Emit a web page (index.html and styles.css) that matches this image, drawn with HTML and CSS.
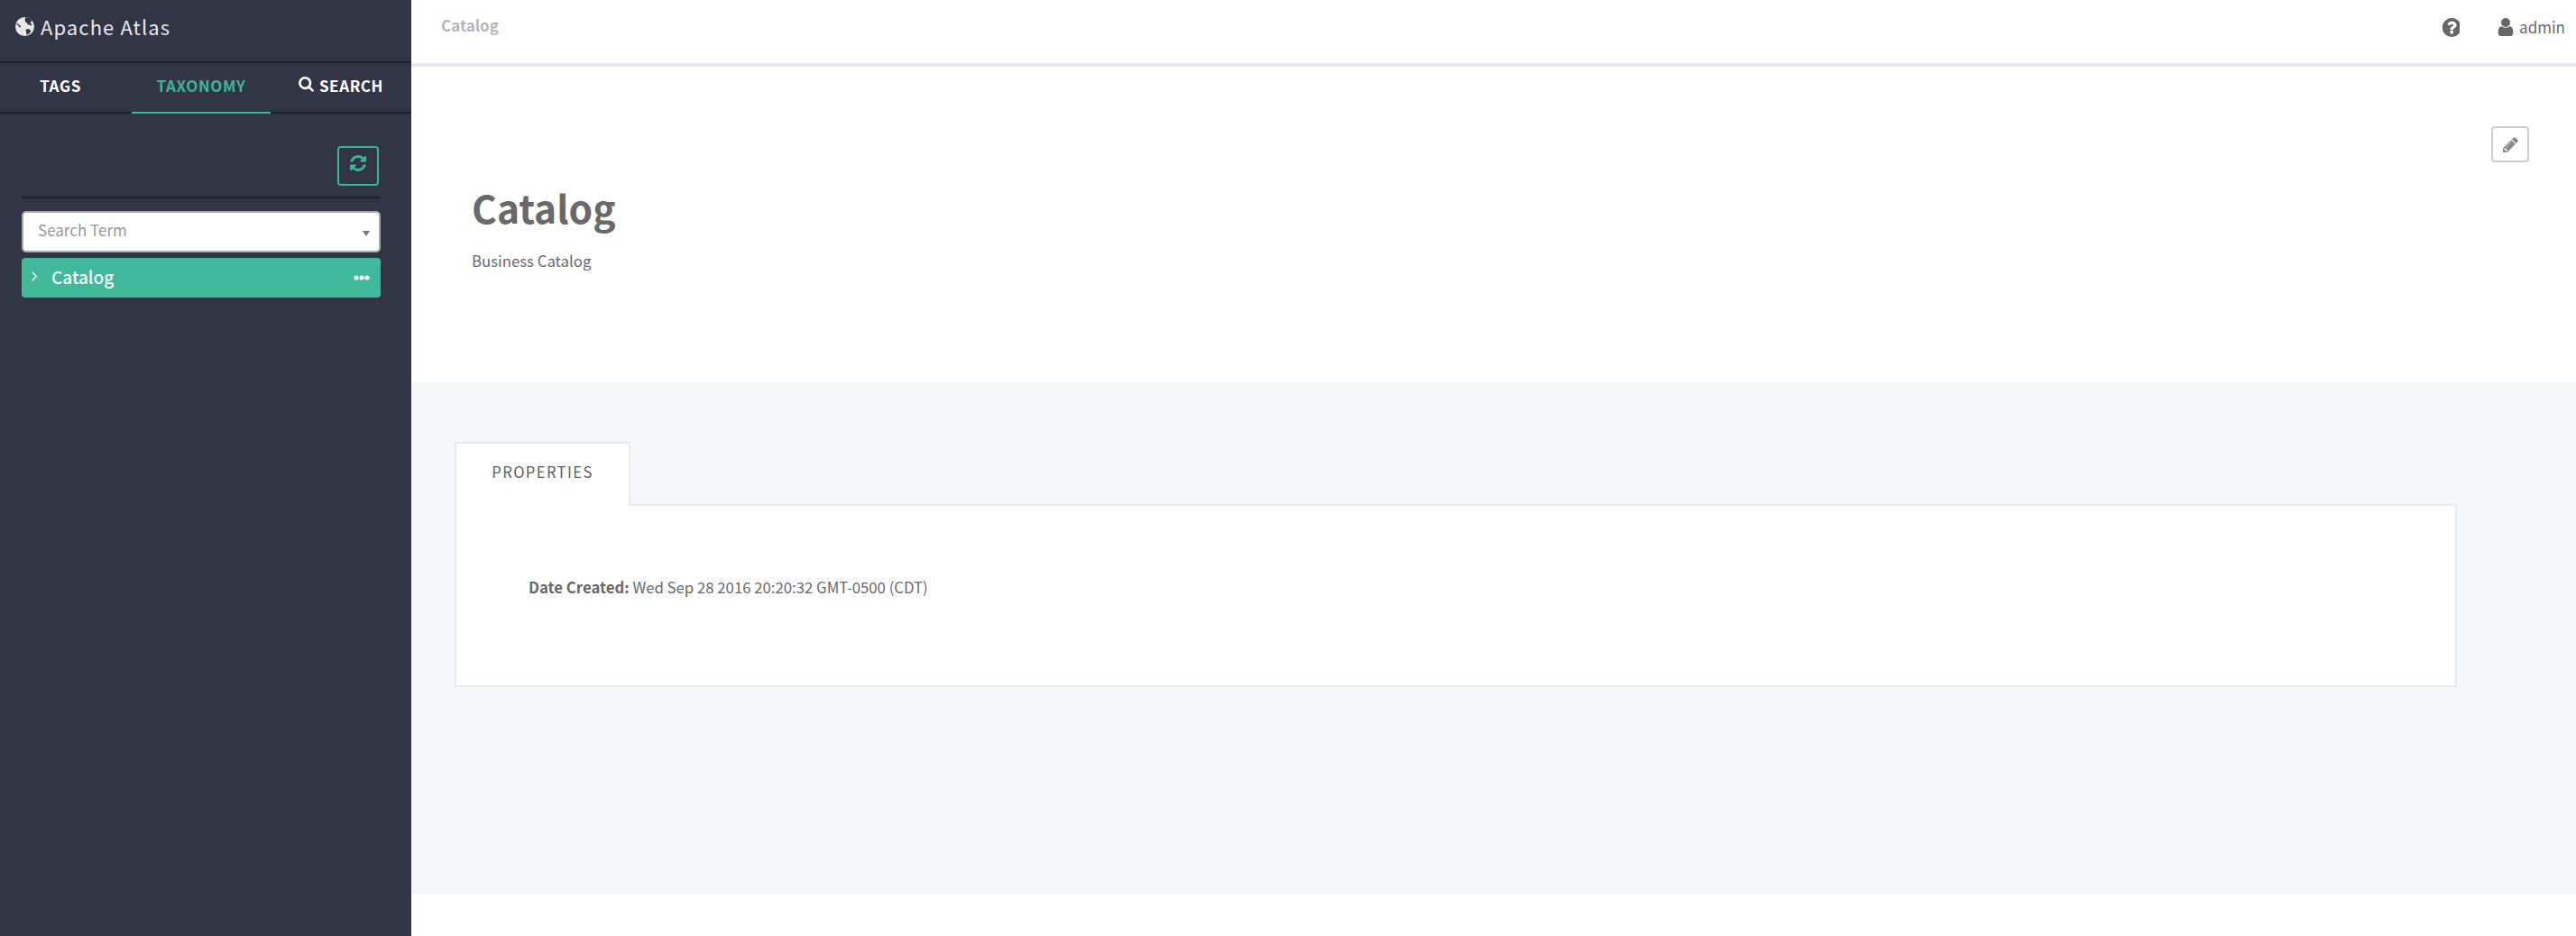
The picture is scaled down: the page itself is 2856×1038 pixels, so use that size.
FILE: index.html
```html
<!DOCTYPE html>
<html lang="en">
<head>
<meta charset="utf-8">
<title>Apache Atlas</title>
<link rel="stylesheet" href="styles.css">
</head>
<body>
<div class="app">
  <aside class="sidebar">
    <div class="brand">
      <svg class="brand-icon" viewBox="0 0 100 100"><circle cx="50" cy="50" r="50" fill="#e8e8e8"/><path fill="#323544" d="M52 3c8-1 20 1 27 6 5 4 8 8 10 12l-7 3-3 7 8 6-2 9-9-5-9-1-6-10-8-4-2-10zM60 62l14 2 9 9-6 9-8 9-9 2-2-13-3-10zM8 30c3 5 7 5 9 9 3 3 8 2 10 7 3 4 1 8-2 9l-4-3-5-8-7-4z"/></svg>
      <span class="brand-name">Apache Atlas</span>
    </div>
    <nav class="side-tabs">
      <a class="side-tab tags">TAGS</a>
      <a class="side-tab active">TAXONOMY</a>
      <a class="side-tab"><svg class="tab-icon" viewBox="0 0 1664 1792"><path fill="currentColor" d="M1152 704q0-185-131.5-316.5t-316.5-131.5-316.5 131.5-131.5 316.5 131.5 316.5 316.5 131.5 316.5-131.5 131.5-316.5zm512 832q0 52-38 90t-90 38q-54 0-90-38l-343-342q-179 124-399 124-143 0-273.5-55.5t-225-150-150-225-55.5-273.5 55.5-273.5 150-225 225-150 273.5-55.5 273.5 55.5 225 150 150 225 55.5 273.5q0 220-124 399l343 343q37 37 37 90z"/></svg>SEARCH</a>
    </nav>
    <div class="side-body">
      <div class="toolbar">
        <button class="refresh"><svg class="refresh-icon" viewBox="128 128 1536 1536"><path fill="currentColor" d="M1639 1056q0 5-1 7-64 268-268 434.5t-478 166.5q-146 0-282.5-55t-243.5-157l-129 129q-19 19-45 19t-45-19-19-45v-448q0-26 19-45t45-19h448q26 0 45 19t19 45-19 45l-137 137q71 66 161 102t187 36q134 0 250-65t186-179q11-17 53-117 8-23 30-23h192q13 0 22.5 9.5t9.5 22.5zm25-800v448q0 26-19 45t-45 19h-448q-26 0-45-19t-19-45 19-45l138-138q-148-137-349-137-134 0-250 65t-186 179q-11 17-53 117-8 23-30 23h-199q-13 0-22.5-9.5t-9.5-22.5v-7q65-268 270-434.5t480-166.5q146 0 284 55.5t245 156.5l130-129q19-19 45-19t45 19 19 45z"/></svg></button>
      </div>
      <div class="select">
        <span class="placeholder">Search Term</span>
        <span class="caret"></span>
      </div>
      <div class="tree-row">
        <svg class="chevron" viewBox="0 0 10 16"><path fill="none" stroke="currentColor" stroke-width="1.6" d="M2 2l6 6-6 6"/></svg>
        <span class="tree-label">Catalog</span>
        <svg class="dots" viewBox="0 0 18 6"><circle cx="3" cy="3" r="2.6" fill="currentColor"/><circle cx="9" cy="3" r="2.6" fill="currentColor"/><circle cx="15" cy="3" r="2.6" fill="currentColor"/></svg>
      </div>
    </div>
  </aside>
  <main class="main">
    <header class="topbar">
      <span class="crumb">Catalog</span>
      <div class="top-actions">
        <svg class="help" viewBox="0 0 1536 1536"><path fill="currentColor" transform="translate(0 -128)" d="M1024 1376v-192q0-14-9-23t-23-9h-192q-14 0-23 9t-9 23v192q0 14 9 23t23 9h192q14 0 23-9t9-23zm256-672q0-88-55.5-163t-138.5-116-170-41q-243 0-371 213-15 24 8 42l132 100q7 6 19 6 16 0 25-12 53-68 86-92 34-24 86-24 48 0 85.5 26t37.5 59q0 38-20 61t-68 45q-63 28-115.5 86.5t-52.5 125.5v36q0 14 9 23t23 9h192q14 0 23-9t9-23q0-19 21.5-49.5t54.5-49.5q32-18 49-28.5t46-35 44.5-48 28-60.5 12.5-81zm384 192q0 209-103 385.5t-279.5 279.5-385.5 103-385.5-103-279.5-279.5-103-385.5 103-385.5 279.5-279.5 385.5-103 385.5 103 279.5 279.5 103 385.5z"/></svg>
        <span class="user">
          <svg class="user-icon" viewBox="256 128 1280 1536"><path fill="currentColor" d="M1536 1399q0 109-62.5 187t-150.5 78h-854q-88 0-150.5-78t-62.5-187q0-85 8.5-160.5t31.5-152 58.5-131 94-89 134.5-34.5q131 128 313 128t313-128q76 0 134.5 34.5t94 89 58.5 131 31.5 152 8.5 160.5zm-256-887q0 159-112.5 271.5t-271.5 112.5-271.5-112.5-112.5-271.5 112.5-271.5 271.5-112.5 271.5 112.5 112.5 271.5z"/></svg>
          admin
        </span>
      </div>
    </header>
    <section class="hero">
      <div class="hero-actions">
        <button class="edit"><svg class="edit-icon" viewBox="128 128 1536 1536"><path fill="currentColor" d="M491 1536l91-91-235-235-91 91v107h128v128h107zm523-928q0-22-22-22-10 0-17 7l-542 542q-7 7-7 17 0 22 22 22 10 0 17-7l542-542q7-7 7-17zm-54-192l416 416-832 832h-416v-416zm683 96q0 53-37 90l-166 166-416-416 166-165q36-38 90-38 53 0 91 38l235 234q37 39 37 91z"/></svg></button>
      </div>
      <h1 class="title">Catalog</h1>
      <p class="subtitle">Business Catalog</p>
    </section>
    <section class="details">
      <div class="tab-strip"><span class="tab">PROPERTIES</span></div>
      <div class="tab-panel">
        <p class="prop"><strong>Date Created:</strong> Wed Sep 28 2016 20:20:32 GMT-0500 (CDT)</p>
      </div>
    </section>
  </main>
</div>
</body>
</html>
```
FILE: styles.css
```css
* { box-sizing: border-box; }
html, body { margin: 0; height: 100%; }
body {
  font-family: "Noto Sans CJK SC", "Noto Sans", sans-serif;
  color: #686868;
  background: #fff;
  overflow: hidden;
}
.app { display: flex; height: 1038px; }

.sidebar { width: 456px; flex: none; background: #323544; color: #fff; }
.brand {
  height: 70px;
  border-bottom: 2px solid #1f2028;
  display: flex;
  align-items: center;
  gap: 7px;
  padding: 0 0 10px 17px;
}
.brand-icon { width: 21px; height: 21px; }
.brand-name { font-size: 22px; line-height: 30px; letter-spacing: 1.1px; color: #e9e9ec; }

.side-tabs {
  height: 56px;
  display: grid;
  grid-template-columns: 146px 154px 156px;
  border-bottom: 2px solid #1f2028;
}
.side-tab {
  display: flex;
  align-items: center;
  justify-content: center;
  height: 56px;
  font-size: 17px;
  font-weight: 700;
  letter-spacing: 0.6px;
  color: #fff;
  padding-bottom: 6px;
  border-bottom: 2px solid transparent;
}
.side-tab.tags { padding-right: 12px; }
.side-tab.active { color: #38b795; border-bottom-color: #38b795; }
.tab-icon { width: 17px; height: 18px; margin-right: 6px; }

.side-body { padding: 36px 34px 0 24px; }
.toolbar {
  display: flex;
  justify-content: flex-end;
  width: 398px;
  padding-right: 2px;
  border-bottom: 2px solid #1f2028;
  height: 58px;
}
.refresh {
  width: 46px;
  height: 44px;
  padding: 0;
  background: transparent;
  border: 2px solid #38b795;
  border-radius: 4px;
  color: #38b795;
  display: flex;
  align-items: flex-start;
  justify-content: center;
}
.refresh-icon { width: 18px; height: 18px; margin-top: 8px; }

.select {
  width: 398px;
  height: 46px;
  margin-top: 14px;
  background: #fff;
  border: 2px solid #aaa;
  border-radius: 5px;
  display: flex;
  align-items: center;
  justify-content: space-between;
  padding: 0 10px 0 16px;
}
.placeholder { font-size: 17px; line-height: 24px; color: #999; margin-bottom: 4px; }
.caret {
  width: 0;
  height: 0;
  margin-top: 4px;
  border-left: 4px solid transparent;
  border-right: 4px solid transparent;
  border-top: 6px solid #777;
}
.tree-row {
  width: 398px;
  height: 44px;
  margin-top: 6px;
  background: #40b99a;
  border-radius: 4px;
  color: #fff;
  display: flex;
  align-items: center;
  padding: 0 12px 0 10px;
}
.chevron { width: 8px; height: 13px; margin-bottom: 4px; }
.tree-label { flex: 1; margin-left: 15px; font-size: 19px; line-height: 30px; font-weight: 500; margin-bottom: 2px; }
.dots { width: 18px; height: 6px; }

.main { flex: 1; min-width: 0; }
.topbar {
  height: 74px;
  border-bottom: 4px solid #e8e9f0;
  display: flex;
  align-items: center;
  justify-content: space-between;
  padding: 0 12px 10px 33px;
}
.crumb { font-size: 17px; line-height: 26px; font-weight: 600; color: #b2b4ba; margin-bottom: 4px; }
.top-actions { display: flex; align-items: center; gap: 42px; }
.help { width: 21px; height: 21px; color: #666; }
.user { display: flex; align-items: center; gap: 6px; font-size: 17px; line-height: 26px; color: #6a6a6a; }
.user-icon { width: 18px; height: 20px; color: #666; }

.hero { height: 350px; padding: 66px 52px 0 67px; position: relative; }
.hero-actions { display: flex; justify-content: flex-end; height: 42px; }
.edit {
  width: 42px;
  height: 40px;
  padding: 0;
  background: #fff;
  border: 2px solid #ccc;
  border-radius: 4px;
  display: flex;
  align-items: center;
  justify-content: center;
  color: #888;
}
.edit-icon { width: 17px; height: 17px; }
.title { margin: 18px 0 0; font-size: 42.5px; line-height: 60px; font-weight: 700; color: #696969; }
.subtitle { margin: 16px 0 0; font-size: 16.8px; line-height: 26px; color: #686868; }

.details { height: 568px; background: #f6f7fb; padding: 66px 132px 0 48px; }
.tab-strip { display: flex; align-items: flex-start; height: 69px; }
.tab {
  width: 195px;
  height: 71px;
  background: #fff;
  border: 2px solid #e8e9f0;
  border-bottom: 0;
  position: relative;
  z-index: 1;
  display: flex;
  align-items: center;
  justify-content: center;
  padding-bottom: 8px;
  font-size: 16.6px;
  letter-spacing: 1.4px;
  color: #5e5e5e;
}
.tab-panel {
  height: 203px;
  background: #fff;
  border: 2px solid #e8e9f0;
  padding: 77px 0 0 80px;
}
.prop { margin: 0; font-size: 16.75px; line-height: 26px; color: #686868; }
```
